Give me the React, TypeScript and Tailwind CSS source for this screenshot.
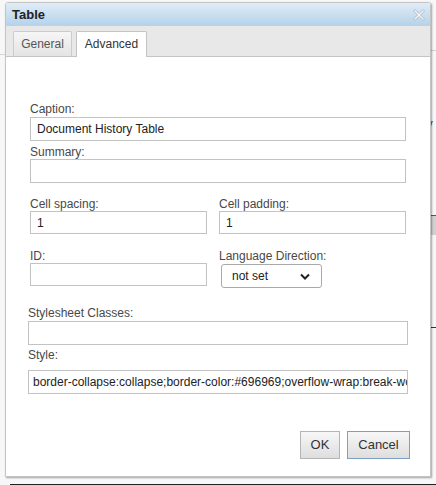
import React from "react";

const font = "font-['Liberation_Sans',Arial,sans-serif]";

function Label({ children, className = "" }: { children: React.ReactNode; className?: string }) {
  return <div className={`h-[14px] text-[12px] leading-[14px] text-[#484848] ${className}`}>{children}</div>;
}

function Field({ value = "", className = "" }: { value?: string; className?: string }) {
  return (
    <input
      readOnly
      value={value}
      className={`block w-full border border-[#c3c3c3] bg-white pr-0 text-[12px] text-[#222] outline-none ${font} ${className}`}
    />
  );
}

function CloseIcon() {
  return (
    <svg width="12" height="12" viewBox="0 0 12 12">
      <polygon
        points="0.5,2 2,0.5 6,4.5 10,0.5 11.5,2 7.5,6 11.5,10 10,11.5 6,7.5 2,11.5 0.5,10 4.5,6"
        fill="#f3f6f9"
        stroke="#b2b8bf"
        strokeWidth="1"
        strokeLinejoin="round"
      />
    </svg>
  );
}

export default function App() {
  return (
    <div className={`relative h-[485px] w-[436px] overflow-hidden bg-[#f7f7f7] ${font}`}>
      {/* page behind the dialog */}
      <div className="absolute left-0 top-[54px] h-px w-[8px] bg-[#d6d6d6]" />
      <div className="absolute left-[420px] top-[50px] h-px w-[16px] bg-[#cfcfcf]" />
      <span className="absolute left-[422px] top-[114px] text-[13px] text-[#444]">ry</span>
      <div className="absolute left-[420px] top-[215px] h-[20px] w-[16px] border-t border-[#555] bg-[#d0d0d0]" />
      <div className="absolute left-[420px] top-[327px] h-px w-[16px] bg-[#333]" />
      <span className="absolute left-[424px] top-[331px] text-[13px] text-[#444]">ti</span>

      {/* dialog */}
      <div className="relative z-10 ml-[5px] mt-[2px] flex h-[475px] w-[426px] flex-col rounded-t-[3px] border border-[#c4c4c4] bg-white shadow-[1px_1px_2px_rgba(0,0,0,0.35)]">
        <div className="flex h-[23px] items-center justify-between bg-gradient-to-b from-[#e0ecf7] to-[#b4d2ea] pl-[6px] pr-[5px]">
          <span className="text-[13px] font-bold text-[#222]">Table</span>
          <CloseIcon />
        </div>

        <div className="flex h-[31px] items-end gap-[4px] border-b border-[#c4c4c4] bg-[#e8e8e8] pl-[7px]">
          <div className="flex h-[25px] w-[59px] items-center justify-center rounded-t-[2px] border border-b-0 border-[#cbcbcb] bg-gradient-to-b from-[#f6f6f6] to-[#e4e4e4] text-[12px] text-[#555]">
            General
          </div>
          <div className="-mb-px flex h-[26px] w-[71px] items-center justify-center rounded-t-[2px] border border-b-0 border-[#c4c4c4] bg-white pb-px text-[12px] text-[#333]">
            Advanced
          </div>
        </div>

        <div className="flex flex-1 flex-col pt-[45px]">
          <div className="pl-[24px] pr-[24px]">
            <Label>Caption:</Label>
            <Field value="Document History Table" className="mt-[1px] h-[24px] pl-[6px]" />
            <Label className="mt-[4px]">Summary:</Label>
            <Field className="h-[24px] pl-[6px]" />

            <div className="mt-[14px] grid grid-cols-[177px_187px] gap-x-[12px]">
              <div>
                <Label>Cell spacing:</Label>
                <Field value="1" className="h-[23px] pl-[6px]" />
              </div>
              <div>
                <Label>Cell padding:</Label>
                <Field value="1" className="h-[23px] pl-[6px]" />
              </div>
            </div>

            <div className="mt-[15px] grid grid-cols-[177px_187px] gap-x-[12px]">
              <div>
                <Label>ID:</Label>
                <Field className="h-[23px] pl-[6px]" />
              </div>
              <div>
                <Label>Language Direction:</Label>
                <div className="ml-[2px] mt-[1px] flex h-[24px] w-[101px] items-center justify-between rounded-[3px] border border-[#a9a9a9] bg-white pl-[10px] pr-[11px] text-[12px] text-[#222]">
                  <span>not set</span>
                  <svg width="10" height="7" viewBox="0 0 10 7">
                    <path d="M1 1.5 L5 5.5 L9 1.5" fill="none" stroke="#222" strokeWidth="2" />
                  </svg>
                </div>
              </div>
            </div>
          </div>

          <div className="mt-[18px] pl-[22px] pr-[22px]">
            <Label>Stylesheet Classes:</Label>
            <Field className="mt-[1px] h-[24px] pl-[6px]" />
            <Label className="mt-[3px]">Style:</Label>
            <Field
              value="border-collapse:collapse;border-color:#696969;overflow-wrap:break-word;width:100%"
              className="mt-[8px] h-[24px] pl-[4px]"
            />
          </div>

          <div className="mt-[37px] flex justify-end gap-[7px] pr-[20px]">
            <button className="h-[28px] w-[40px] border border-[#b5b5b5] bg-gradient-to-b from-[#f7f7f7] to-[#dedede] text-[13px] text-[#333]">
              OK
            </button>
            <button className="h-[28px] w-[63px] border border-[#7d9fc0] bg-gradient-to-b from-[#f7f7f7] to-[#dedede] text-[13px] text-[#333]">
              Cancel
            </button>
          </div>
        </div>
      </div>

      {/* table on the page below */}
      <div className="ml-[10px] mt-[7px] flex h-[20px] border-l border-t border-[#222]">
        <div className="w-[83px] border-r border-[#555]" />
        <div className="w-[176px] border-r border-[#555]" />
        <div className="flex-1" />
      </div>
    </div>
  );
}
